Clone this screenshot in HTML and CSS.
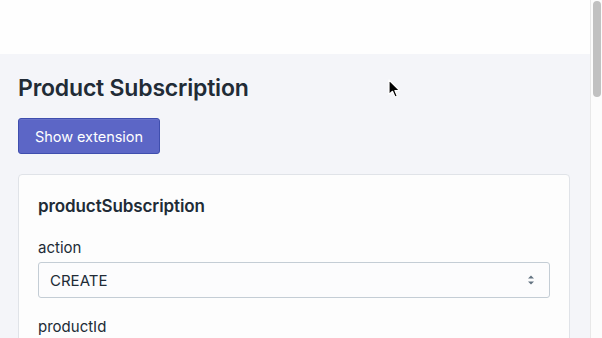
FILE: index.html
```html
<!DOCTYPE html>
<html lang="en">
<head>
<meta charset="utf-8">
<title>Product Subscription</title>
<link rel="stylesheet" href="styles.css">
</head>
<body>
<div class="viewport">
  <div class="page">
    <header class="topbar"></header>
    <main class="content">
      <h1 class="title">Product Subscription</h1>
      <button class="btn-primary" type="button">Show extension</button>
      <section class="card">
        <h2 class="card-title">productSubscription</h2>
        <label class="field-label">action</label>
        <div class="select">
          <span class="select-value">CREATE</span>
          <svg class="select-arrows" width="8" height="12" viewBox="0 0 8 12"><path d="M4 1.5 L7 4.5 H1 Z M4 10.5 L7 7.5 H1 Z" fill="#637381"/></svg>
        </div>
        <label class="field-label">productId</label>
      </section>
    </main>
  </div>
  <div class="scrollbar"><div class="thumb"></div></div>
</div>
<svg class="cursor" width="14" height="20" viewBox="0 0 14 20"><path d="M1 1 L1 15.5 L4.5 12.3 L7 18 L9.3 17 L6.9 11.5 L11.6 11.5 Z" fill="#000" stroke="#fff" stroke-width="1.2" stroke-linejoin="round"/></svg>
</body>
</html>
```
FILE: styles.css
```css
* { box-sizing: border-box; }
html, body { margin: 0; padding: 0; height: 100%; overflow: hidden; }
body {
  font-family: Inter, "Noto Sans", "Liberation Sans", sans-serif;
  color: #212b36;
  background: #f4f6f8;
}
.viewport { display: flex; height: 338px; }
.page { flex: 1; display: flex; flex-direction: column; background: #f4f5f9; }
.topbar { height: 54px; background: #fefefe; flex: none; }
.content { padding: 19px 20px 0 18px; }
.title {
  margin: 0;
  font-size: 23px;
  line-height: 31px;
  font-weight: 600;
  color: #212b36;
  letter-spacing: -0.2px;
}
.btn-primary {
  margin-top: 14px;
  height: 36px;
  padding: 0 16px;
  background: #5c66c6;
  border: 1px solid #3f4eae;
  border-radius: 3px;
  color: #fff;
  font-family: inherit;
  font-size: 14.5px;
  letter-spacing: -0.05px;
  box-shadow: inset 0 1px 0 rgba(255,255,255,0.08);
}
.card {
  margin-top: 20px;
  background: #fdfdfd;
  border: 1px solid #e0e3e8;
  border-radius: 4px;
  padding: 19px 19px 0 19px;
  height: 200px;
}
.card-title {
  margin: 0 0 20px 0;
  font-size: 17px;
  line-height: 24px;
  font-weight: 600;
  letter-spacing: -0.1px;
}
.field-label { display: block; font-size: 15px; line-height: 20px; margin-bottom: 4px; }
.select {
  height: 36px;
  border: 1px solid #c4cdd5;
  border-radius: 3px;
  background: #fcfcfd;
  display: flex;
  align-items: center;
  justify-content: space-between;
  padding: 0 14px 0 11px;
  margin-bottom: 19px;
}
.select-value { font-size: 15px; }
.scrollbar {
  width: 12px;
  flex: none;
  background: #fcfcfc;
  border-left: 1px solid #e8e8e8;
  padding: 1px 1px 0 2px;
}
.thumb { height: 96px; background: #c1c1c1; border-radius: 5px; }
.cursor { position: absolute; left: 388px; top: 79px; }
```
